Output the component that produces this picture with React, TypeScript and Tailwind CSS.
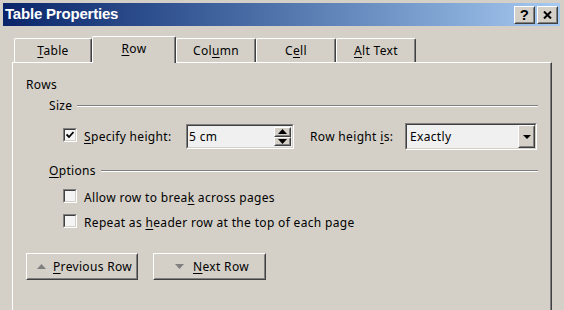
const font = { fontFamily: '"Noto Sans", "Open Sans", sans-serif', letterSpacing: "0.33px" };

const raisedOuter =
  "border border-t-white border-l-white border-r-[#404040] border-b-[#404040]";
const raisedInner =
  "border border-t-[#d4d0c8] border-l-[#d4d0c8] border-r-[#808080] border-b-[#808080]";
const sunkenOuter =
  "border border-t-[#808080] border-l-[#808080] border-r-white border-b-white";
const sunkenInner =
  "border border-t-[#404040] border-l-[#404040] border-r-[#d4d0c8] border-b-[#d4d0c8]";

function U({ children }: { children: string }) {
  return <span className="underline underline-offset-[2px]">{children}</span>;
}

function Tri({ up, color = "#000", w = 7, h = 4 }: { up?: boolean; color?: string; w?: number; h?: number }) {
  return (
    <svg width={w} height={h} viewBox={`0 0 ${w} ${h}`} className="block">
      {up ? (
        <polygon points={`0,${h} ${w / 2},0 ${w},${h}`} fill={color} />
      ) : (
        <polygon points={`0,0 ${w},0 ${w / 2},${h}`} fill={color} />
      )}
    </svg>
  );
}

function Checkbox({ checked }: { checked?: boolean }) {
  return (
    <div className={`${sunkenOuter} w-[14px] h-[14px] shrink-0`}>
      <div className={`${sunkenInner} w-full h-full bg-[#f4f4f4] flex items-center justify-center`}>
        {checked && (
          <svg width="8" height="8" viewBox="0 0 8 8" className="block">
            <path d="M0.5 3.5 L3 6 L7.5 1" stroke="#000" strokeWidth="1.8" fill="none" />
          </svg>
        )}
      </div>
    </div>
  );
}

function Group({ label }: { label: React.ReactNode }) {
  return (
    <div className="flex items-start h-[16px] ml-[23px]">
      <span className="leading-[16px] whitespace-nowrap">{label}</span>
      <div className="flex-1 ml-[5px] mt-[7px] h-[2px] border-t border-t-[#808080] border-b border-b-white" />
    </div>
  );
}

function TabItem({ label, selected, w }: { label: React.ReactNode; selected?: boolean; w: number }) {
  if (selected) {
    return (
      <div
        className="relative z-10 h-[27px] -mb-[1px] bg-[#d4d0c8] border-t border-l border-t-white border-l-white border-r border-r-[#404040] shadow-[inset_-1px_0_0_#808080] rounded-t-[2px] flex justify-center pt-[4px] leading-[16px]"
        style={{ width: w }}
      >
        {label}
      </div>
    );
  }
  return (
    <div
      className="h-[24px] bg-[#d4d0c8] border-t border-l border-t-white border-l-white border-r border-r-[#404040] shadow-[inset_-1px_0_0_#808080] rounded-t-[2px] flex justify-center pt-[4px] leading-[16px]"
      style={{ width: w }}
    >
      {label}
    </div>
  );
}

export default function App() {
  return (
    <div
      className="w-[564px] h-[310px] overflow-hidden bg-[#d4d0c8] text-black text-[12px]"
      style={font}
    >
      <div className="pt-[3px] pl-[3px] pr-[4px]">
        {/* title bar */}
        <div className="h-[23px] flex items-center bg-gradient-to-r from-[#0a246a] to-[#a6caf0] pl-[2px] pr-[2px]">
          <span
            className="flex-1 text-white font-bold text-[15px] tracking-[-0.2px]"
            style={{ fontFamily: '"Liberation Sans", Arial, sans-serif' }}
          >
            Table Properties
          </span>
          <div className={`${raisedOuter} w-[21px] h-[18px] bg-[#d4d0c8]`}>
            <div className={`${raisedInner} w-full h-full flex items-center justify-center`}>
              <span
                className="font-bold text-[15px] leading-none"
                style={{ fontFamily: '"Liberation Sans", Arial, sans-serif' }}
              >
                ?
              </span>
            </div>
          </div>
          <div className={`${raisedOuter} ml-[2px] w-[21px] h-[18px] bg-[#d4d0c8]`}>
            <div className={`${raisedInner} w-full h-full flex items-center justify-center`}>
              <svg width="9" height="8" viewBox="0 0 9 8" className="block">
                <path d="M1 0.5 L8 7.5 M8 0.5 L1 7.5" stroke="#000" strokeWidth="2" />
              </svg>
            </div>
          </div>
        </div>

        {/* tabs */}
        <div className="mt-[10px] ml-[11px] h-[26px] flex items-end">
          <TabItem w={78} label={<span><U>T</U>able</span>} />
          <TabItem w={84} selected label={<span><U>R</U>ow</span>} />
          <TabItem w={80} label={<span>Col<U>u</U>mn</span>} />
          <TabItem w={80} label={<span>C<U>e</U>ll</span>} />
          <TabItem w={80} label={<span><U>A</U>lt Text</span>} />
        </div>

        {/* panel */}
        <div className="ml-[9px] w-[540px] h-[260px] border-t border-l border-t-white border-l-white border-r border-r-[#404040] shadow-[inset_-1px_0_0_#808080] pl-[13px] pr-[13px]">
          <div className="mt-[14px] leading-[16px]">Rows</div>

          <div className="mt-[5px]">
            <Group label="Size" />
          </div>

          <div className="mt-[9px] h-[27px] flex items-center ml-[37px]">
            <div className="self-start mt-[5px]">
              <Checkbox checked />
            </div>
            <span className="ml-[7px] w-[102px] leading-[16px] whitespace-nowrap">
              <U>S</U>pecify height:
            </span>
            <div className={`${sunkenOuter} w-[108px] h-[25px]`}>
              <div className={`${sunkenInner} w-full h-full bg-[#f0f0f0] flex items-center`}>
                <span className="flex-1 pl-[1px] leading-[16px]">5 cm</span>
                <div className="w-[17px] h-full flex flex-col py-[1px] mr-[1px]">
                  <div className={`${raisedOuter} flex-1 bg-[#d4d0c8]`}>
                    <div className={`${raisedInner} w-full h-full flex items-center justify-center`}>
                      <Tri up w={9} h={5} />
                    </div>
                  </div>
                  <div className={`${raisedOuter} flex-1 bg-[#d4d0c8]`}>
                    <div className={`${raisedInner} w-full h-full flex items-center justify-center`}>
                      <Tri w={9} h={5} />
                    </div>
                  </div>
                </div>
              </div>
            </div>
            <span className="ml-[16px] w-[95px] leading-[16px] whitespace-nowrap">
              Row height <U>i</U>s:
            </span>
            <div className={`${sunkenOuter} w-[132px] h-[27px]`}>
              <div className={`${sunkenInner} w-full h-full bg-[#f0f0f0] flex items-center`}>
                <span className="flex-1 pl-[3px] leading-[16px]">Exactly</span>
                <div className={`${raisedOuter} w-[17px] h-[23px] bg-[#d4d0c8]`}>
                  <div className={`${raisedInner} w-full h-full flex items-center justify-center`}>
                    <Tri w={8} h={4} />
                  </div>
                </div>
              </div>
            </div>
          </div>

          <div className="mt-[13px]">
            <Group label={<><U>O</U>ptions</>} />
          </div>

          <div className="mt-[11px] h-[16px] flex items-start ml-[37px]">
            <div className="-mt-[1px]">
              <Checkbox />
            </div>
            <span className="ml-[7px] leading-[16px] whitespace-nowrap">
              Allow row to brea<U>k</U> across pages
            </span>
          </div>

          <div className="mt-[9px] h-[16px] flex items-start ml-[37px]">
            <div className="-mt-[1px]">
              <Checkbox />
            </div>
            <span className="ml-[7px] leading-[16px] whitespace-nowrap">
              Repeat as <U>h</U>eader row at the top of each page
            </span>
          </div>

          <div className="mt-[22px] flex gap-[15px]">
            <div className={`${raisedOuter} w-[112px] h-[27px] bg-[#d4d0c8]`}>
              <div className={`${raisedInner} w-full h-full flex items-center pl-[9px]`}>
                <Tri up color="#808080" w={9} h={5} />
                <span className="ml-[7px] leading-[16px]">
                  <U>P</U>revious Row
                </span>
              </div>
            </div>
            <div className={`${raisedOuter} w-[113px] h-[27px] bg-[#d4d0c8]`}>
              <div className={`${raisedInner} w-full h-full flex items-center pl-[20px]`}>
                <Tri color="#808080" w={9} h={5} />
                <span className="ml-[9px] leading-[16px]">
                  <U>N</U>ext Row
                </span>
              </div>
            </div>
          </div>
        </div>
      </div>
    </div>
  );
}
